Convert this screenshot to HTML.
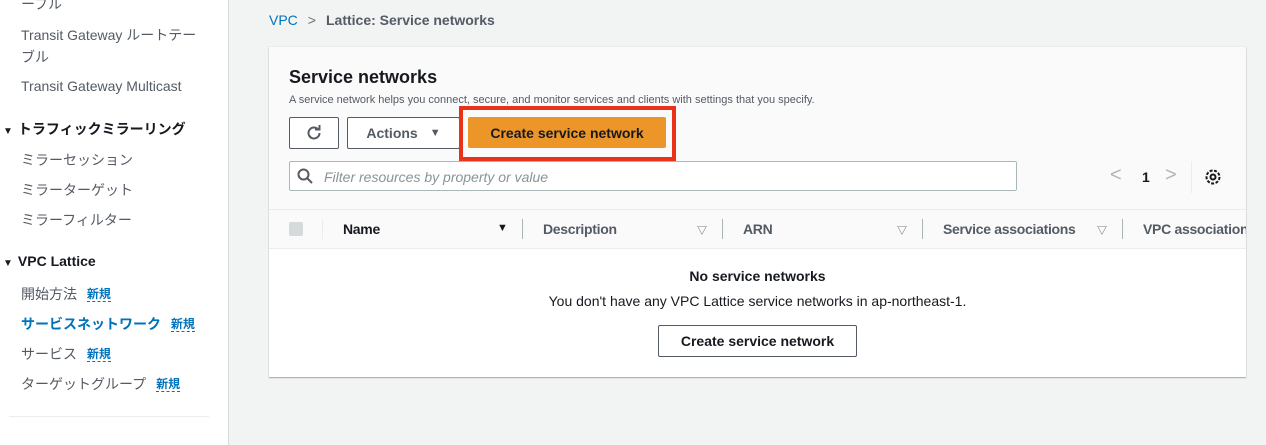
<!DOCTYPE html>
<html><head><meta charset="utf-8"><style>
*{box-sizing:border-box;margin:0;padding:0}
body{width:1266px;height:445px;overflow:hidden;background:#f2f3f3;font-family:"Liberation Sans","Noto Sans CJK JP",sans-serif;color:#16191f;position:relative}
.side{position:absolute;left:0;top:0;width:229px;height:445px;background:#fff;border-right:1px solid #d5dbdb}
.t{position:absolute;font-size:14px;color:#545b64;white-space:nowrap}
.h{position:absolute;font-size:14px;font-weight:bold;color:#16191f;white-space:nowrap}
.new{color:#0073bb;font-size:12px;font-weight:bold;border-bottom:1px dashed #0073bb;margin-left:6px;position:relative;top:-1px}
.abs{position:absolute}
.card{position:absolute;left:269px;top:47px;width:977px;height:330px;background:#fff;box-shadow:0 1px 1px rgba(0,0,0,.3),0 0 0 1px #eaeded}
.btn{position:absolute;border:1px solid #545b64;border-radius:2px;background:#fff;font-weight:bold;font-size:14px;color:#545b64;display:flex;align-items:center;justify-content:center}
.th{position:absolute;top:221px;font-size:14px;font-weight:bold;color:#545b64;white-space:nowrap;letter-spacing:-0.3px}
.sep{position:absolute;top:219px;width:1px;height:20px;background:#aab7b8}
</style></head><body>
<div class="side">
<div class="t" style="left:21px;top:-6px;color:#545b64">ーブル</div>
<div class="t" style="left:21px;top:25px">Transit Gateway ルートテー</div>
<div class="t" style="left:21px;top:47px">ブル</div>
<div class="t" style="left:21px;top:78px">Transit Gateway Multicast</div>
<div class="h" style="left:3px;top:119px"><span style="font-size:10px;margin-right:5px">▼</span>トラフィックミラーリング</div>
<div class="t" style="left:21px;top:150px">ミラーセッション</div>
<div class="t" style="left:21px;top:180px">ミラーターゲット</div>
<div class="t" style="left:21px;top:210px">ミラーフィルター</div>
<div class="h" style="left:3px;top:253px"><span style="font-size:10px;margin-right:5px">▼</span>VPC Lattice</div>
<div class="t" style="left:21px;top:284px">開始方法 <span class="new">新規</span></div>
<div class="t" style="left:21px;top:314px;color:#0073bb;font-weight:bold">サービスネットワーク <span class="new">新規</span></div>
<div class="t" style="left:21px;top:344px">サービス <span class="new">新規</span></div>
<div class="t" style="left:21px;top:374px">ターゲットグループ <span class="new">新規</span></div>
<div class="abs" style="left:9px;top:416px;width:200px;height:1px;background:#eaeded"></div>
</div>
<div class="abs" style="left:269px;top:12px;font-size:14px;white-space:nowrap"><span style="color:#0073bb">VPC</span><span style="color:#687078;margin:0 10px">&gt;</span><span style="font-weight:bold;color:#545b64">Lattice: Service networks</span></div>
<div class="card">
<div class="abs" style="left:0;top:0;width:977px;height:201px;background:#fafafa"></div>
<div class="abs" style="left:0;top:162px;width:977px;height:40px;background:#fafafa;border-top:1px solid #eaeded;border-bottom:1px solid #eaeded"></div>
</div>
<div class="abs" style="left:289px;top:67px;font-size:18px;font-weight:bold">Service networks</div>
<div class="abs" style="left:289px;top:94px;font-size:11px;color:#545b64;white-space:nowrap">A service network helps you connect, secure, and monitor services and clients with settings that you specify.</div>
<div class="btn" style="left:289px;top:117px;width:50px;height:32px"><svg width="18" height="18" viewBox="0 0 18 18"><path d="M14.5 9a5.5 5.5 0 1 1-1.6-3.9" fill="none" stroke="#545b64" stroke-width="2"/><path d="M10 5.5h4.5V1" fill="none" stroke="#545b64" stroke-width="2"/></svg></div>
<div class="btn" style="left:347px;top:117px;width:113px;height:32px">Actions<span style="font-size:11px;margin-left:12px">▼</span></div>
<div class="abs" style="left:459px;top:106px;width:217px;height:55px;border:4px solid #e8321a"></div>
<div class="btn" style="left:468px;top:117px;width:198px;height:31px;background:#ec9528;border-color:#ec9528;color:#16191f">Create service network</div>
<div class="abs" style="left:289px;top:161px;width:728px;height:30px;background:#fff;border:1px solid #aab7b8;border-radius:2px"></div>
<svg class="abs" style="left:297px;top:168px" width="16" height="16" viewBox="0 0 16 16"><circle cx="6.5" cy="6.5" r="5" fill="none" stroke="#545b64" stroke-width="2"/><path d="M10 10l5 5" stroke="#545b64" stroke-width="2"/></svg>
<div class="abs" style="left:324px;top:169px;font-size:14px;font-style:italic;color:#879596">Filter resources by property or value</div>
<div class="abs" style="left:1110px;top:164px;font-size:20px;color:#aab7b8">&lt;</div>
<div class="abs" style="left:1142px;top:169px;font-size:14px;font-weight:bold">1</div>
<div class="abs" style="left:1165px;top:164px;font-size:20px;color:#aab7b8">&gt;</div>
<div class="abs" style="left:1191px;top:161px;width:1px;height:32px;background:#eaeded"></div>
<svg class="abs" style="left:1204px;top:168px" width="18" height="18" viewBox="0 0 18 18"><circle cx="9" cy="9" r="6.5" fill="none" stroke="#16191f" stroke-width="2" stroke-dasharray="3 1.5"/><circle cx="9" cy="9" r="2.5" fill="none" stroke="#16191f" stroke-width="2"/></svg>
<div class="abs" style="left:289px;top:222px;width:14px;height:14px;background:#d5dbdb;border-radius:2px"></div>
<div class="sep" style="left:322px;background:#eaeded"></div>
<div class="th" style="left:343px;color:#16191f">Name</div><div class="abs" style="left:497px;top:222px;font-size:11px">▼</div>
<div class="sep" style="left:522px"></div>
<div class="th" style="left:543px">Description</div><div class="abs" style="left:697px;top:222px;font-size:10px;color:#545b64">▽</div>
<div class="sep" style="left:722px"></div>
<div class="th" style="left:743px">ARN</div><div class="abs" style="left:897px;top:222px;font-size:10px;color:#545b64">▽</div>
<div class="sep" style="left:922px"></div>
<div class="th" style="left:943px">Service associations</div><div class="abs" style="left:1097px;top:222px;font-size:10px;color:#545b64">▽</div>
<div class="sep" style="left:1122px"></div>
<div class="th" style="left:1143px;width:103px;overflow:hidden">VPC associations</div>
<div class="abs" style="left:269px;top:268px;width:977px;text-align:center;font-size:14px;font-weight:bold;color:#16191f">No service networks</div>
<div class="abs" style="left:269px;top:293px;width:977px;text-align:center;font-size:14px;color:#16191f">You don't have any VPC Lattice service networks in ap-northeast-1.</div>
<div class="btn" style="left:658px;top:325px;width:199px;height:32px;color:#16191f">Create service network</div>
</body></html>
